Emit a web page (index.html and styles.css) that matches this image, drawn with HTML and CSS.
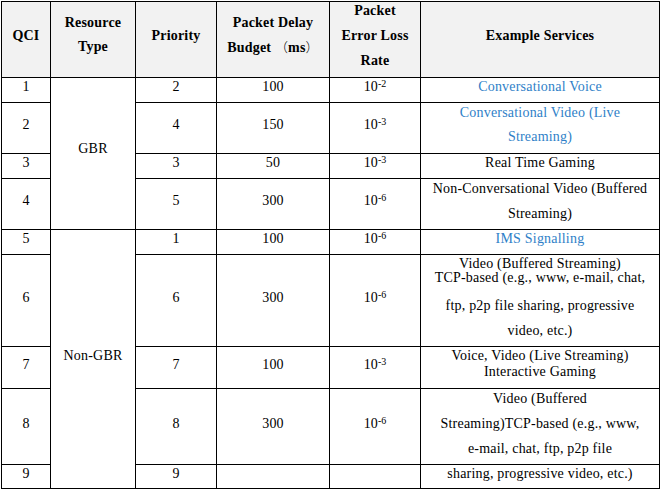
FILE: index.html
```html
<!DOCTYPE html>
<html>
<head>
<meta charset="utf-8">
<link rel="stylesheet" href="styles.css">
</head>
<body>
<div class="qtable">
  <div class="c h">QCI</div>
  <div class="c h lh24"><div>Resource<br>Type</div></div>
  <div class="c h">Priority</div>
  <div class="c h lh24"><div>Packet Delay<br>Budget <span class="cjk">（</span>ms<span class="cjk">）</span></div></div>
  <div class="c h lh25"><div>Packet<br>Error Loss<br>Rate</div></div>
  <div class="c h">Example Services</div>

  <div class="c">1</div>
  <div class="c gbr">GBR</div>
  <div class="c">2</div>
  <div class="c">100</div>
  <div class="c"><span>10<sup>-2</sup></span></div>
  <div class="c blue">Conversational Voice</div>

  <div class="c">2</div>
  <div class="c">4</div>
  <div class="c">150</div>
  <div class="c"><span>10<sup>-3</sup></span></div>
  <div class="c blue lh24"><div>Conversational Video (Live<br>Streaming)</div></div>

  <div class="c">3</div>
  <div class="c">3</div>
  <div class="c">50</div>
  <div class="c"><span>10<sup>-3</sup></span></div>
  <div class="c">Real Time Gaming</div>

  <div class="c">4</div>
  <div class="c">5</div>
  <div class="c">300</div>
  <div class="c"><span>10<sup>-6</sup></span></div>
  <div class="c lh25"><div>Non-Conversational Video (Buffered<br>Streaming)</div></div>

  <div class="c">5</div>
  <div class="c ngbr">Non-GBR</div>
  <div class="c">1</div>
  <div class="c">100</div>
  <div class="c"><span>10<sup>-6</sup></span></div>
  <div class="c blue">IMS Signalling</div>

  <div class="c">6</div>
  <div class="c">6</div>
  <div class="c">300</div>
  <div class="c"><span>10<sup>-6</sup></span></div>
  <div class="c">
    <div class="lines">
      <div class="ln">Video (Buffered Streaming)</div>
      <div class="ln">TCP-based (e.g., www, e-mail, chat,</div>
      <div class="ln gap14">ftp, p2p file sharing, progressive</div>
      <div class="ln gap11">video, etc.)</div>
    </div>
  </div>

  <div class="c">7</div>
  <div class="c">7</div>
  <div class="c">100</div>
  <div class="c"><span>10<sup>-3</sup></span></div>
  <div class="c lh16"><div>Voice, Video (Live Streaming)<br>Interactive Gaming</div></div>

  <div class="c">8</div>
  <div class="c">8</div>
  <div class="c">300</div>
  <div class="c"><span>10<sup>-6</sup></span></div>
  <div class="c lh25"><div>Video (Buffered<br>Streaming)TCP-based (e.g., www,<br>e-mail, chat, ftp, p2p file</div></div>

  <div class="c">9</div>
  <div class="c">9</div>
  <div class="c"></div>
  <div class="c"></div>
  <div class="c">sharing, progressive video, etc.)</div>
</div>
</body>
</html>
```

FILE: styles.css
```css
html, body {
  margin: 0;
  padding: 0;
  background: #fff;
}

body {
  font-family: "Liberation Serif", "DejaVu Serif", serif;
  font-size: 14px;
  letter-spacing: 0.2px;
  color: #000;
}

.qtable {
  margin: 1px 0 0 1px;
  width: 657px;
  display: grid;
  grid-template-columns: 48px 84px 80px 112px 90px 238px;
  grid-template-rows: 75px 24px 50px 24px 50px 24px 91px 41px 75px 23px;
  gap: 1px;
  background: #000;
  border: 1px solid #000;
  box-sizing: content-box;
}

.c {
  background: #fff;
  display: flex;
  align-items: center;
  justify-content: center;
  text-align: center;
  padding-bottom: 7px;
  box-sizing: border-box;
  overflow: hidden;
  line-height: 15px;
  white-space: nowrap;
}

.h {
  background: #f2f2f2;
  font-weight: bold;
  padding-bottom: 9px;
}

.lh24 { line-height: 24px; }
.lh25 { line-height: 25px; }
.lh16 { line-height: 16px; }

.cjk {
  font-family: "Noto Sans CJK SC", sans-serif;
  font-weight: 300;
  font-size: 13px;
}

.blue { color: #2f7fc8; }

.gbr {
  grid-column: 2;
  grid-row: 2 / span 4;
  padding-bottom: 10px;
}

.ngbr {
  grid-column: 2;
  grid-row: 6 / span 5;
}

sup {
  font-size: 10px;
  line-height: 0;
  vertical-align: 4px;
  letter-spacing: 0;
}

.lines .ln { line-height: 14px; }
.lines .gap14 { margin-top: 14px; }
.lines .gap11 { margin-top: 11px; }
```
